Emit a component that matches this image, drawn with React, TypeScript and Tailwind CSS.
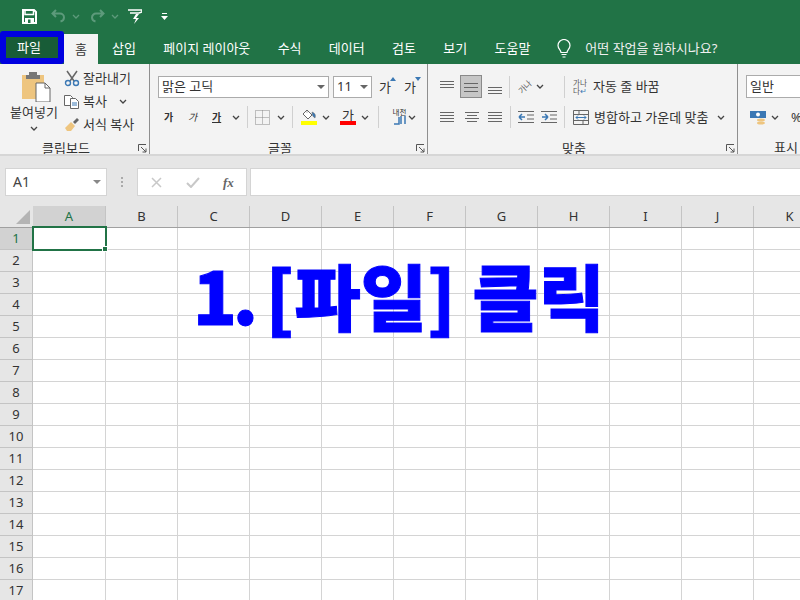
import React from "react";

const Caret = ({ c = "#444" }: { c?: string }) => (
  <svg width="8" height="5" viewBox="0 0 8 5" className="shrink-0"><path d="M1 1l3 3 3-3" fill="none" stroke={c} strokeWidth="1.300" /></svg>
);
const Tri = ({ c = "#777" }: { c?: string }) => (
  <svg width="8" height="4" viewBox="0 0 8 4" className="shrink-0"><path d="M0 0h8L4 4z" fill={c} /></svg>
);
const Launcher = () => (
  <svg width="9" height="9" viewBox="0 0 9 9" className="shrink-0"><path d="M.5 7V.5H8M3 3l5 5M8 4.500V8H4.500" fill="none" stroke="#555" strokeWidth="1" /></svg>
);
const Sep = () => <div className="w-px h-[22px] bg-[#d0d0d0] shrink-0" />;
const Lines = ({ w, rows }: { w: number; rows: [number, number][] }) => (
  <svg width={w} height="14" viewBox={`0 0 ${w} 14`} className="shrink-0">
    {rows.map(([a, y], i) => <path key={i} d={`M${a} ${y}.5H${w - a}`} stroke="#666" strokeWidth="1" />)}
  </svg>
);
const Group = ({ w, label, children }: { w: number; label: string; children: React.ReactNode }) => (
  <div className="relative flex flex-col shrink-0 h-[91px] border-r border-[#8f8f8f]" style={{ width: w }}>
    <div className="h-[73px] shrink-0">{children}</div>
    <div className="flex-1 flex items-center justify-center text-[13px] text-[#333] leading-none pt-[4px] pr-[17px]">{label}</div>
    <div className="absolute right-[2px] bottom-[2px]"><Launcher /></div>
  </div>
);

const tabs = ["삽입", "페이지 레이아웃", "수식", "데이터", "검토", "보기", "도움말"];
const cols = ["A", "B", "C", "D", "E", "F", "G", "H", "I", "J", "K"];
const rows = Array.from({ length: 17 }, (_, i) => i + 1);

export default function App() {
  return (
    <div className="w-[800px] h-[600px] overflow-hidden relative bg-[#e6e6e6] text-[#333] font-['Noto_Sans','Noto_Sans_CJK_KR',sans-serif]">
      {/* quick access */}
      <div className="h-8 bg-[#217346] flex items-center">
        <svg width="15" height="15" viewBox="0 0 15 15" className="ml-[22px]"><path d="M1 1h11l2 2v11H1z" fill="none" stroke="#fff" strokeWidth="2" /><path d="M3 1v4.500h8.500V1" fill="none" stroke="#fff" strokeWidth="1.500" /><path d="M3 9h9v5H3z" fill="#fff" /><path d="M6 10.500h2.500V14H6z" fill="#217346" /></svg>
        <svg width="15" height="14" viewBox="0 0 15 14" className="ml-[14px]"><path d="M5 1L1.500 4.500 5 8M2 4.500h7a4 4 0 0 1 4 4c0 2-1.500 3.500-3.500 4" fill="none" stroke="#5d9a7b" strokeWidth="2" /></svg>
        <div className="ml-[6px]"><Caret c="#5d9a7b" /></div>
        <svg width="15" height="14" viewBox="0 0 15 14" className="ml-[10px]"><path d="M10 1l3.500 3.500L10 8M13 4.500H6a4 4 0 0 0-4 4c0 2 1.500 3.500 3.500 4" fill="none" stroke="#5d9a7b" strokeWidth="2" /></svg>
        <div className="ml-[6px]"><Caret c="#5d9a7b" /></div>
        <svg width="14" height="15" viewBox="0 0 14 15" className="ml-[9px]"><path d="M0 1h14v2l-3 1H2" fill="none" stroke="#fff" strokeWidth="1.500" /><path d="M8 5h3L8 9h3l-5 6 2-5H5z" fill="#fff" /></svg>
        <svg width="7" height="7" viewBox="0 0 7 7" className="ml-[19px]"><path d="M1 .5h5" stroke="#fff" /><path d="M0 3h7L3.500 7z" fill="#fff" /></svg>
      </div>
      {/* tabs */}
      <div className="h-8 bg-[#217346] flex items-end text-[13px] text-white leading-none">
        <div className="w-[64px] h-[33px] -mt-px shrink-0 border-[6px] border-[#0000e0] rounded-[3px] bg-[#185c37] flex items-center justify-center pr-[6px]">파일</div>
        <div className="w-[34px] h-[30px] shrink-0 bg-[#f3f3f3] text-[#333] flex items-center justify-center">홈</div>
        <div className="flex items-center h-8 pl-[14px] gap-[27.3px]">
          {tabs.map((t) => <span key={t} className="whitespace-nowrap">{t}</span>)}
        </div>
        <div className="flex items-center h-8 ml-[27px] gap-[14px]">
          <svg width="14" height="19" viewBox="0 0 14 19"><path d="M4 13.500C4 11 1 10 1 6.500a6 6 0 0 1 12 0c0 3.500-3 4.500-3 7zM4.500 15.500h5M5.500 18h3" fill="none" stroke="#fff" strokeWidth="1.200" /></svg>
          <span className="text-[#f0f0f0] whitespace-nowrap">어떤 작업을 원하시나요?</span>
        </div>
      </div>
      {/* ribbon */}
      <div className="h-[92px] bg-[#f3f3f3] border-b-2 border-[#d6d6d6] flex text-[13px] leading-none overflow-hidden">
        <Group w={150} label="클립보드">
          <div className="flex">
            <div className="w-[64px] flex flex-col items-center pt-2 pl-[4px] shrink-0">
              <svg width="30" height="30" viewBox="0 0 30 30" className="ml-[4px]"><path d="M1 3h22v24H1z" fill="#eec57f" /><path d="M8 0h8v3h3v4H5V3h3z" fill="#777" /><path d="M15 11h9l5 5v14H15z" fill="#fff" stroke="#666" /><path d="M24 11v5h5" fill="none" stroke="#666" /></svg>
              <span className="mt-[4px] whitespace-nowrap">붙여넣기</span>
              <div className="mt-[7px]"><Caret /></div>
            </div>
            <div className="flex flex-col gap-[6px] pt-[6px]">
              <div className="h-[17px] flex items-center gap-[3px]">
                <svg width="16" height="17" viewBox="0 0 16 17"><path d="M3 1l7 10M13 1L6 11" stroke="#666" strokeWidth="1.500" /><circle cx="4" cy="13" r="2.500" fill="none" stroke="#3b78b4" strokeWidth="1.400" /><circle cx="12" cy="13" r="2.500" fill="none" stroke="#3b78b4" strokeWidth="1.400" /></svg>
                <span>잘라내기</span>
              </div>
              <div className="h-[17px] flex items-center gap-[3px]">
                <svg width="16" height="15" viewBox="0 0 16 15"><path d="M.5 1.500h6l2 2v8H.5z" fill="#fff" stroke="#666" /><path d="M6.500 4.500h5l3 3v7h-8z" fill="#fff" stroke="#666" /><path d="M8 9h5M8 11h5" stroke="#3b78b4" /></svg>
                <span>복사</span>
                <div className="ml-[9px]"><Caret /></div>
              </div>
              <div className="h-[17px] flex items-center gap-[3px]">
                <svg width="16" height="15" viewBox="0 0 16 15"><path d="M1 11l6-6 4 4-4 5H3z" fill="#eec57f" /><path d="M9 5l4-4 2 2-4 4z" fill="#666" /></svg>
                <span className="whitespace-nowrap">서식 복사</span>
              </div>
            </div>
          </div>
        </Group>
        <Group w={278} label="글꼴">
          <div className="pl-2 pt-3 flex flex-col gap-2">
            <div className="flex items-center h-[22px]">
              <div className="w-[171px] h-[22px] bg-white border border-[#ababab] flex items-center justify-between pl-[3px] pr-[3px] pb-px">
                <span>맑은 고딕</span><Tri c="#666" />
              </div>
              <div className="w-[39px] h-[22px] ml-[4px] bg-white border border-[#ababab] flex items-center justify-between pl-[3px] pr-[3px] pb-px">
                <span>11</span><Tri c="#666" />
              </div>
              <div className="ml-[7px] relative w-[14px] text-[13px]">가<span className="absolute -top-[4px] right-[-3px] border-x-[3px] border-x-transparent border-b-[4px] border-b-[#3b78b4]" /></div>
              <div className="ml-[11px] relative w-[14px] text-[13px]">가<span className="absolute -top-[4px] right-[-3px] border-x-[3px] border-x-transparent border-t-[4px] border-t-[#3b78b4]" /></div>
            </div>
            <div className="flex items-center h-[22px]">
              <span className="ml-[6px] w-[10px] text-[10px] font-bold">가</span>
              <span className="ml-[14px] w-[10px] text-[10px] italic">가</span>
              <span className="ml-[14px] w-[10px] text-[10px] underline font-bold">가</span>
              <div className="ml-[10px]"><Caret /></div>
              <div className="ml-[7px]"><Sep /></div>
              <svg width="15" height="15" viewBox="0 0 15 15" className="ml-[7px]"><path d="M.5.5h14v14H.500zM7.500.5v14M.5 7.500h14" fill="none" stroke="#888" strokeDasharray="1 1" /></svg>
              <div className="ml-[7px]"><Caret /></div>
              <div className="ml-[7px]"><Sep /></div>
              <div className="ml-[8px] w-[16px] flex flex-col items-center">
                <svg width="16" height="12" viewBox="0 0 16 12"><path d="M6 1l5 5-4 4-5-5z" fill="#fff" stroke="#666" /><path d="M6 1v3M11 3c3 1 4 3 3 6-2-1-3-3-3-6z" fill="#3b78b4" stroke="#666" strokeWidth=".5" /></svg>
                <div className="w-[16px] h-1 bg-[#ffff00]" />
              </div>
              <div className="ml-[5px]"><Caret /></div>
              <div className="ml-[10px] w-[16px] flex flex-col items-center text-[13px] leading-none">
                <span className="h-[12px] leading-[12px]">가</span>
                <div className="w-[16px] h-1 bg-[#ff0000]" />
              </div>
              <div className="ml-[5px]"><Caret /></div>
              <div className="ml-[9px]"><Sep /></div>
              <div className="ml-[13px] w-[15px] flex flex-col items-center text-[7.500px] leading-none overflow-hidden">
                <span className="whitespace-nowrap">내천</span>
                <svg width="14" height="9" viewBox="0 0 14 9"><path d="M1 8h5V1M8 0v8M12 0v8" fill="none" stroke="#3b78b4" strokeWidth="1.500" /></svg>
              </div>
              <div className="ml-[1px]"><Caret /></div>
            </div>
          </div>
        </Group>
        <Group w={310} label="맞춤">
          <div className="pl-[12px] pt-[11px] flex flex-col gap-[8px]">
            <div className="flex items-center h-[23px]">
              <Lines w={14} rows={[[0, 1], [0, 4], [0, 7]]} />
              <div className="ml-[6px] w-[22px] h-[23px] bg-[#c6c6c6] border border-[#8a8a8a] flex items-center justify-center"><Lines w={14} rows={[[0, 3], [0, 7], [0, 11]]} /></div>
              <div className="ml-[6px]"><Lines w={14} rows={[[0, 7], [0, 10], [0, 13]]} /></div>
              <div className="ml-[7px]"><Sep /></div>
              <div className="ml-[7px] w-[16px] h-[16px] flex items-center justify-center text-[8px] leading-none text-[#555] -rotate-45 whitespace-nowrap">가나</div>
              <div className="ml-[3px]"><Caret /></div>
              <div className="ml-[20px]"><Sep /></div>
              <div className="ml-[8px] w-[16px] flex flex-col text-[7.500px] leading-[8px] text-[#555] shrink-0 whitespace-nowrap overflow-hidden"><span>가나</span><span>다<span className="text-[#3b78b4]">↵</span></span></div>
              <span className="ml-[4px] whitespace-nowrap">자동 줄 바꿈</span>
            </div>
            <div className="flex items-center h-[22px]">
              <Lines w={14} rows={[[0, 2], [0, 5], [0, 8], [0, 11]]} />
              <div className="ml-[11px]"><Lines w={14} rows={[[0, 2], [2, 5], [0, 8], [2, 11]]} /></div>
              <div className="ml-[9px]"><Lines w={14} rows={[[0, 2], [0, 5], [0, 8], [0, 11]]} /></div>
              <div className="ml-[8px]"><Sep /></div>
              <svg width="16" height="14" viewBox="0 0 16 14" className="ml-[7px]"><path d="M1 7h6M1 7l3-3M1 7l3 3" fill="none" stroke="#3b78b4" strokeWidth="1.500" /><path d="M0 1.500h16M9 5h7M9 9h7M0 12.500h16" stroke="#666" /></svg>
              <svg width="16" height="14" viewBox="0 0 16 14" className="ml-[7px]"><path d="M1 7h6M7 7L4 4M7 7l-3 3" fill="none" stroke="#3b78b4" strokeWidth="1.500" /><path d="M0 1.500h16M9 5h7M9 9h7M0 12.500h16" stroke="#666" /></svg>
              <div className="ml-[7px]"><Sep /></div>
              <svg width="16" height="15" viewBox="0 0 16 15" className="ml-[8px]"><path d="M.5.5h15v14H.5zM.5 4.500h15M.5 10.500h15M6 .5v4M10 10.500v4" fill="none" stroke="#666" /><path d="M3 7.500h10M3 7.500l2-2M3 7.500l2 2M13 7.500l-2-2M13 7.500l-2 2" fill="none" stroke="#3b78b4" /></svg>
              <span className="ml-[5px] whitespace-nowrap">병합하고 가운데 맞춤</span>
              <div className="ml-[9px]"><Caret /></div>
            </div>
          </div>
        </Group>
        <div className="w-[62px] shrink-0 h-[91px] flex flex-col pl-2">
          <div className="h-[73px] pt-[11px] flex flex-col gap-[8px]">
            <div className="w-[60px] h-[23px] bg-white border border-[#ababab] flex items-center pl-[3px] shrink-0">일반</div>
            <div className="flex items-center h-[22px] pl-[4px]">
              <svg width="16" height="15" viewBox="0 0 16 15" className="shrink-0"><path d="M0 1h16v7H0z" fill="#3b78b4" /><circle cx="8" cy="4.500" r="2" fill="#fff" /><ellipse cx="11" cy="10" rx="4" ry="1.500" fill="#eec57f" /><ellipse cx="11" cy="13" rx="4" ry="1.500" fill="#eec57f" /></svg>
              <div className="ml-[5px]"><Caret /></div>
              <span className="ml-[12px] text-[13px]">%</span>
            </div>
          </div>
          <div className="whitespace-nowrap pl-[28px] mt-[4px] leading-none">표시 형식</div>
        </div>
      </div>
      {/* formula bar */}
      <div className="h-[50px] pt-[12px] pl-[5px] flex text-[14px] leading-none shrink-0">
        <div className="w-[102px] h-7 bg-white border border-[#d4d4d4] flex items-center justify-between pl-[7px] pr-[5px] shrink-0">
          <span className="text-[#444]">A1</span><Tri c="#888" />
        </div>
        <div className="w-[30px] h-7 flex flex-col items-center justify-center gap-[2px] shrink-0">
          <span className="w-[2px] h-[2px] bg-[#aaa]" /><span className="w-[2px] h-[2px] bg-[#aaa]" /><span className="w-[2px] h-[2px] bg-[#aaa]" />
        </div>
        <div className="w-[110px] h-7 bg-white border border-[#d4d4d4] flex items-center shrink-0">
          <svg width="11" height="11" viewBox="0 0 11 11" className="ml-[13px]"><path d="M1 1l9 9M10 1l-9 9" stroke="#c8c8c8" strokeWidth="1.500" /></svg>
          <svg width="14" height="11" viewBox="0 0 14 11" className="ml-[24px]"><path d="M1 6l4 4 8-9" fill="none" stroke="#c8c8c8" strokeWidth="2" /></svg>
          <span className="ml-[23px] text-[13px] italic font-bold text-[#666] font-['Liberation_Serif',serif]">fx</span>
        </div>
        <div className="w-[560px] h-7 ml-[3px] bg-white border border-[#d4d4d4] shrink-0" />
      </div>
      {/* sheet */}
      <div className="relative text-[13px] leading-none text-[#333]">
        <div className="flex h-[22px] border-b border-[#a0a0a0]">
          <div className="w-[33px] shrink-0 relative flex items-end justify-end pb-[3px] pr-[3px]">
            <div className="w-0 h-0 border-l-[14px] border-l-transparent border-b-[14px] border-b-[#b4b4b4]" />
          </div>
          {cols.map((c, i) => (
            <div key={c} className={`shrink-0 flex items-center justify-center border-r border-[#c4c4c4] ${i === 0 ? "w-[73px] bg-[#d2d2d2] text-[#217346]" : "w-[72px]"}`}>{c}</div>
          ))}
        </div>
        {rows.map((r) => (
          <div key={r} className="flex h-[22px]">
            <div className={`w-[33px] shrink-0 flex items-center justify-center border-b border-r border-[#c4c4c4] ${r === 1 ? "bg-[#d2d2d2] text-[#217346]" : ""}`}>{r}</div>
            {cols.map((c, i) => <div key={c} className={`shrink-0 bg-white border-r border-b border-[#d4d4d4] ${i === 0 ? "w-[73px]" : "w-[72px]"}`} />)}
          </div>
        ))}
        <div className="absolute left-[32px] top-[20px] w-[75px] h-[25px] border-2 border-[#217346]">
          <div className="absolute -right-[3px] -bottom-[3px] w-[6px] h-[6px] bg-[#217346] border border-white" />
        </div>
        <div className="absolute left-[193px] top-[43px] text-[72px] leading-[90px] font-black text-[#0000ff] whitespace-nowrap [-webkit-text-stroke:1px_#0000ff] font-['Noto_Sans_CJK_KR',sans-serif]"><span className="tracking-[-4px] mr-[-5px]">1.</span> [파일] 클릭</div>
      </div>
    </div>
  );
}
